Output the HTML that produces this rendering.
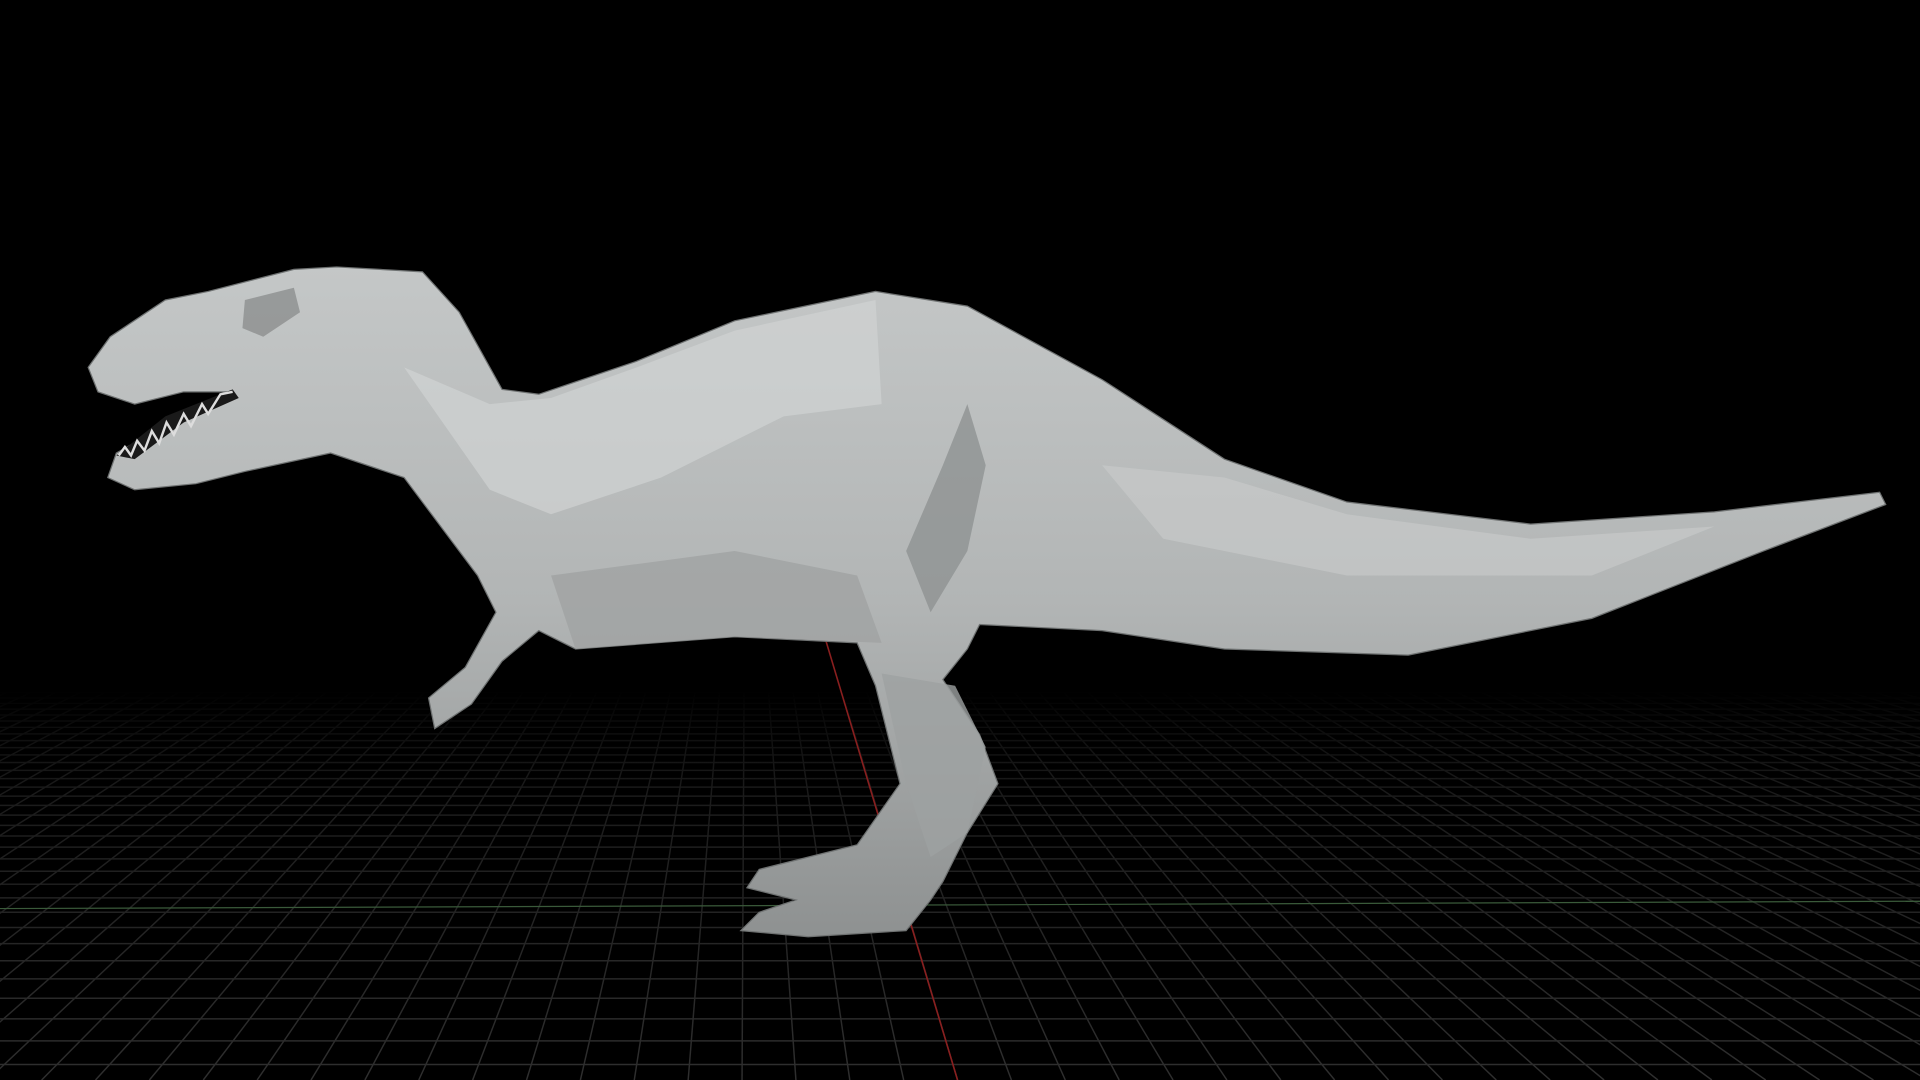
<!DOCTYPE html>
<html><head><meta charset="utf-8"><style>
html,body{margin:0;padding:0;background:#000;width:1920px;height:1080px;overflow:hidden}
svg{display:block}
</style></head><body>
<svg width="1920" height="1080" viewBox="0 0 1568 882" preserveAspectRatio="none">
<defs>
<linearGradient id="fade" x1="0" y1="0" x2="0" y2="1">
<stop offset="0" stop-color="#000"/>
<stop offset="0.64" stop-color="#000"/>
<stop offset="0.75" stop-color="#fff" stop-opacity="0.6"/>
<stop offset="1" stop-color="#fff"/>
</linearGradient>
<mask id="m"><rect width="1568" height="882" fill="url(#fade)"/></mask>
<linearGradient id="body" x1="0" y1="0" x2="0" y2="1">
<stop offset="0" stop-color="#c4c7c7"/>
<stop offset="0.5" stop-color="#b2b5b5"/>
<stop offset="1" stop-color="#8e9191"/>
</linearGradient>
</defs>
<rect width="1568" height="882" fill="#000"/>
<g mask="url(#m)" stroke="#2f2f2f" stroke-width="1.2" fill="none" id="grid"></g>
<line x1="672" y1="515" x2="782" y2="882" stroke="#8a1f1f" stroke-width="1.3"/>
<line x1="0" y1="742" x2="1568" y2="736" stroke="#3a5a3a" stroke-width="1"/>
<polygon fill="url(#body)" stroke="#6f7272" stroke-width="1" points="72,300 90,275 135,245 170,238 240,220 275,218 345,222 375,255 410,318 440,322 520,295 600,262 715,238 790,250 900,310 1000,375 1100,410 1250,428 1400,418 1535,402 1540,412 1440,450 1300,505 1150,535 1000,530 900,515 800,510 790,530 770,555 800,600 815,640 790,680 770,720 760,735 740,760 660,765 605,760 620,745 650,735 610,725 620,710 700,690 735,640 715,560 700,525 600,520 470,530 440,515 410,540 385,575 355,595 350,570 380,545 405,500 390,470 330,390 270,370 200,385 160,395 110,400 88,390 95,370 140,345 190,320 150,320 110,330 80,320"/>
<polygon fill="#d0d3d3" opacity="0.7" points="330,300 400,330 450,325 520,300 600,270 715,245 720,330 640,340 540,390 450,420 400,400"/>
<polygon fill="#a0a3a3" opacity="0.8" points="450,470 600,450 700,470 720,525 600,520 470,530"/>
<polygon fill="#8f9292" opacity="0.8" points="790,330 805,380 790,450 760,500 740,450 770,380"/>
<polygon fill="#c9cccc" opacity="0.6" points="900,380 1000,390 1100,420 1250,440 1400,430 1300,470 1100,470 950,440"/>
<polygon fill="#9ea1a1" opacity="0.8" points="720,550 780,560 805,610 790,680 760,700 740,640"/>
<polygon fill="#8c8f8f" opacity="0.8" points="200,245 240,235 245,255 215,275 198,268"/>
<polygon fill="#1a1a1a" points="95,372 135,340 190,318 195,325 150,345 110,375"/>
<polyline fill="none" stroke="#ddd" stroke-width="2" points="97,372 102,365 107,372 112,360 118,368 124,352 130,362 136,345 142,355 150,338 156,348 165,330 170,338 180,322 190,320"/>
</svg>
<script>
(function(){
var g=document.getElementById('grid'),s='';
var yh=300,A=16820,vx=609;
var y=890;while(y>495){s+='<line x1="0" y1="'+y+'" x2="1568" y2="'+y+'"/>';y-= (y-yh)*(y-yh)/A;}
for(var k=-60;k<=60;k++){var x882=782+k*44;var dx=(x882-vx);
var x0=vx+dx*(495-yh)/(882-yh);s+='<line x1="'+x0+'" y1="495" x2="'+x882+'" y2="882"/>';}
g.innerHTML=s;
})();
</script>
</body></html>
